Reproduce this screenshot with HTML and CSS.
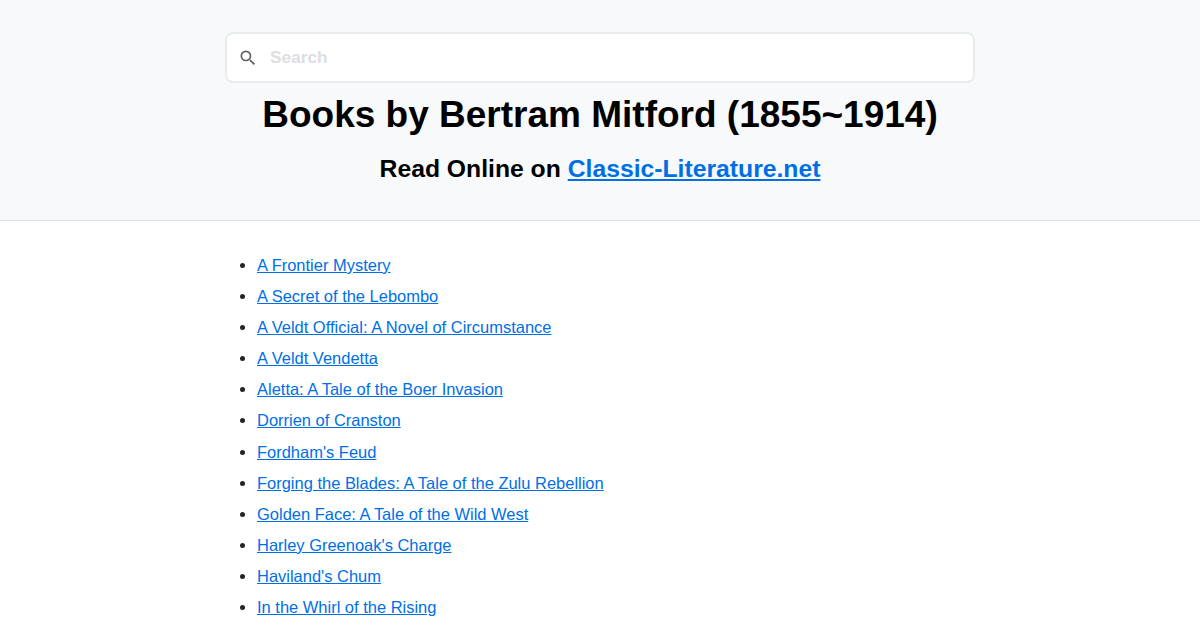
FILE: index.html
```html
<!DOCTYPE html>
<html lang="en">
  <head>
    <meta charset="UTF-8" />
    <title>Books by Bertram Mitford (1855~1914)</title>
    <link rel="stylesheet" href="styles.css">
  </head>
  <body>
    <div class="header">
      <div class="container">
        <div class="search">
          <svg class="search-icon" width="20" height="20" viewBox="0 0 24 24" fill="#5f6368">
            <path d="M15.5 14h-.79l-.28-.27A6.471 6.471 0 0 0 16 9.5 6.5 6.5 0 1 0 9.5 16c1.61 0 3.09-.59 4.23-1.57l.27.28v.79l5 4.99L20.49 19l-4.99-5zm-6 0C7.01 14 5 11.99 5 9.5S7.01 5 9.5 5 14 7.01 14 9.5 11.99 14 9.5 14z"/>
          </svg>
          <input class="search-input" type="text" placeholder="Search">
        </div>
        <h1>Books by Bertram Mitford (1855~1914)</h1>
        <h2>Read Online on <a href="#">Classic-Literature.net</a></h2>
      </div>
    </div>

    <div class="container">
      <ul class="books">
        <li><a href="#">A Frontier Mystery</a></li>
        <li><a href="#">A Secret of the Lebombo</a></li>
        <li><a href="#">A Veldt Official: A Novel of Circumstance</a></li>
        <li><a href="#">A Veldt Vendetta</a></li>
        <li><a href="#">Aletta: A Tale of the Boer Invasion</a></li>
        <li><a href="#">Dorrien of Cranston</a></li>
        <li><a href="#">Fordham's Feud</a></li>
        <li><a href="#">Forging the Blades: A Tale of the Zulu Rebellion</a></li>
        <li><a href="#">Golden Face: A Tale of the Wild West</a></li>
        <li><a href="#">Harley Greenoak's Charge</a></li>
        <li><a href="#">Haviland's Chum</a></li>
        <li><a href="#">In the Whirl of the Rising</a></li>
      </ul>
    </div>
  </body>
</html>
```

FILE: styles.css
```css
* {
  box-sizing: border-box;
}

html, body {
  height: 100%;
}

body {
  margin: 0;
  overflow: hidden;
  font-family: "Liberation Sans", Arial, sans-serif;
  font-size: 16.48px;
  line-height: 1.5;
  color: #212529;
  background: white;
}

a {
  color: #006fe6;
}

.container {
  width: 750px;
  margin: 0 auto;
}

.header {
  height: 221px;
  padding-top: 32px;
  background: #f8f9fa;
  border-bottom: 1px solid #dee2e6;
  text-align: center;
}

.search {
  position: relative;
  margin-bottom: 8px;
}

.search-icon {
  position: absolute;
  top: 16px;
  left: 13px;
}

.search-input {
  display: block;
  width: 100%;
  height: 51px;
  padding: 0 43px;
  font-family: inherit;
  font-size: 17.3px;
  font-weight: 700;
  background: white;
  border: 2px solid #e9ecef;
  border-radius: 8px;
  outline: none;
}

.search-input::placeholder {
  color: #dcdee0;
}

h1 {
  margin: 0 0 10px;
  font-size: 37px;
  font-weight: 700;
  line-height: 48px;
  color: black;
}

h2 {
  margin: 0;
  font-size: 24.72px;
  font-weight: 700;
  line-height: 40px;
  color: black;
}

.books {
  margin: 0;
  padding: 32px 0 0 32px;
}

.books li {
  height: 31.1px;
}
```
